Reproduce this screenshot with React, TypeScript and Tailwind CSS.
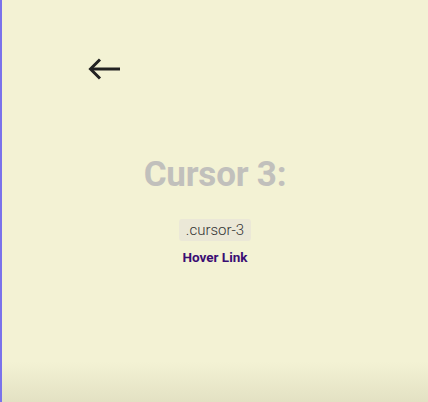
export default function App() {
  return (
    <div
      className="relative flex h-[402px] w-[428px] flex-col overflow-hidden border-l-2 border-[#7a72ec] bg-[#f3f2d4]"
      style={{ fontFamily: 'Roboto, "Liberation Sans", sans-serif' }}
    >
      {/* back arrow */}
      <div className="pl-[85px] pt-[56px]">
        <svg width={34} height={26} viewBox="0 0 34 26" fill="none" stroke="#222" strokeWidth={3} strokeLinecap="butt">
          <path d="M33 13H4" />
          <path d="M13 3.5L3.5 13L13 22.5" />
        </svg>
      </div>

      <div className="mt-[75px] flex flex-col items-center">
        <h1 className="text-[35px] font-bold leading-none tracking-[-0.2px] text-[#c1c0bc]">Cursor 3:</h1>
        <span className="mt-[27px] rounded-[3px] bg-[#ebe8d7] px-[7px] py-[3px] text-[15px] font-light leading-[16px] text-[#333]">
          .cursor-3
        </span>
        <a className="mt-[10px] text-[13.5px] font-bold leading-none text-[#3a0e73]">Hover Link</a>
      </div>

      {/* soft shadow at bottom */}
      <div className="pointer-events-none absolute inset-x-0 bottom-0 h-[40px] bg-gradient-to-b from-transparent to-[#e3e1c3]" />
    </div>
  );
}
